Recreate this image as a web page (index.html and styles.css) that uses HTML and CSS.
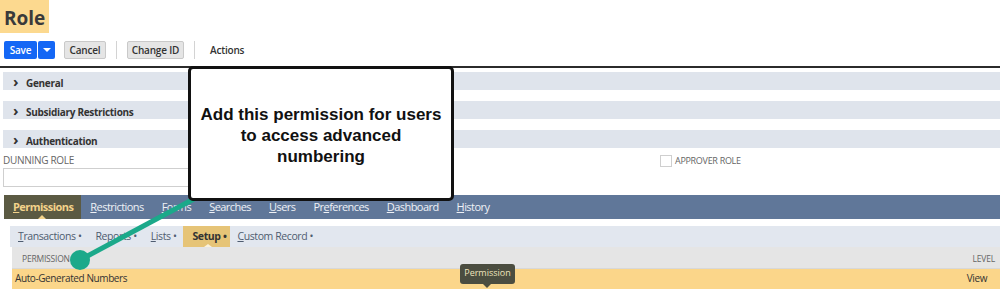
FILE: index.html
```html
<!DOCTYPE html>
<html lang="en">
<head>
  <meta charset="UTF-8" />
  <title>Role</title>
  <link rel="stylesheet" href="styles.css">
</head>
<body>

<div class="page">
  <div class="page-title">Role</div>

  <div class="toolbar">
    <div class="split-button">
      <button class="btn btn-primary">Save</button>
      <button class="btn btn-primary btn-caret"><span class="caret-down"></span></button>
    </div>
    <button class="btn btn-secondary btn-cancel">Cancel</button>
    <span class="toolbar-sep"></span>
    <button class="btn btn-secondary btn-change">Change ID</button>
    <span class="toolbar-sep"></span>
    <span class="toolbar-link">Actions</span>
  </div>

  <div class="page-rule"></div>

  <div class="section-bar"><span class="chevron">›</span>General</div>
  <div class="section-bar"><span class="chevron">›</span>Subsidiary Restrictions</div>
  <div class="section-bar"><span class="chevron">›</span>Authentication</div>

  <div class="field-row">
    <div class="field">
      <label class="field-label">Dunning Role</label>
      <input type="text" class="field-input">
    </div>
    <label class="check-field">
      <span class="check-box"></span>
      Approver Role
    </label>
  </div>

  <div class="tabs">
    <span class="tab active"><u>P</u>ermissions</span>
    <span class="tab"><u>R</u>estrictions</span>
    <span class="tab"><u>F</u>orms</span>
    <span class="tab"><u>S</u>earches</span>
    <span class="tab"><u>U</u>sers</span>
    <span class="tab">Pr<u>e</u>ferences</span>
    <span class="tab"><u>D</u>ashboard</span>
    <span class="tab"><u>H</u>istory</span>
  </div>

  <div class="subtabs">
    <span class="subtab"><u>T</u>ransactions •</span>
    <span class="subtab">Rep<u>o</u>rts •</span>
    <span class="subtab"><u>L</u>ists •</span>
    <span class="subtab active">Setup •</span>
    <span class="subtab"><u>C</u>ustom Record •</span>
  </div>

  <div class="grid-head">
    <span>Permission</span>
    <span>Level</span>
  </div>
  <div class="grid-row">
    <span>Auto-Generated Numbers</span>
    <span>View</span>
  </div>

  <svg class="pointer" width="1000" height="289" viewBox="0 0 1000 289">
    <line x1="80" y1="260" x2="205" y2="193" stroke="#1ba98a" stroke-width="5" />
    <circle cx="80" cy="260" r="10" fill="#1ba98a" />
  </svg>

  <div class="callout">Add this permission for users to access advanced numbering</div>

  <div class="tooltip">Permission</div>
</div>

</body>
</html>
```

FILE: styles.css
```css
* {
  margin: 0; padding: 0; box-sizing: border-box;
}

body {
  font-family: 'Open Sans', 'Noto Sans', sans-serif;
  color: #333;
  background: white;
}

.page {
  position: relative;
  width: 1000px;
  height: 289px;
  overflow: hidden;
}

.page-title {
  width: fit-content;
  background: #fcd98f;
  height: 33px;
  padding: 0 4px;
  font-size: 19px;
  font-weight: bold;
  line-height: 36px;
  color: #3a3a3a;
}

.toolbar {
  display: flex;
  align-items: center;
  height: 18px;
  margin-top: 8px;
  padding-left: 4px;
}

.split-button {
  display: flex;
}

.btn {
  font-family: inherit;
  font-size: 10px;
  font-weight: 600;
  letter-spacing: -0.2px;
  height: 18px;
  border-radius: 2px;
  cursor: pointer;
}

.btn-primary {
  background: #1467f5;
  color: white;
  border: none;
  width: 33px;
}

.btn-caret {
  width: 17px;
  margin-left: 1px;
  display: flex;
  align-items: center;
  justify-content: center;
}

.caret-down {
  width: 0;
  height: 0;
  border-left: 4px solid transparent;
  border-right: 4px solid transparent;
  border-top: 4px solid white;
}

.btn-secondary {
  background: #e5e5e5;
  border: 1px solid #c9c9c9;
  color: #333;
}

.btn-cancel {
  width: 42px;
  margin-left: 9px;
}

.btn-change {
  width: 57px;
}

.toolbar-sep {
  width: 1px;
  height: 18px;
  background: #d3d3d3;
  margin: 0 10px;
}

.toolbar-link {
  font-size: 10px;
  font-weight: 600;
  letter-spacing: -0.2px;
  margin-left: 5px;
}

.page-rule {
  height: 2px;
  background: #2b2b2b;
  margin-top: 7px;
}

.section-bar {
  margin: 4px 0 11px 3px;
  height: 18px;
  background: #dfe4ec;
  font-size: 10px;
  font-weight: bold;
  letter-spacing: -0.3px;
  line-height: 18px;
  color: #333;
}

.section-bar + .section-bar {
  margin-top: 0;
}

.chevron {
  display: inline-block;
  width: 23px;
  padding-left: 10px;
  font-size: 15px;
  font-weight: bold;
}

.field-row {
  display: flex;
  margin-top: -6px;
  padding-left: 3px;
}

.field {
  display: flex;
  flex-direction: column;
}

.field-label {
  font-size: 10px;
  text-transform: uppercase;
  color: #666;
  line-height: 15px;
  letter-spacing: -0.3px;
}

.field-input {
  width: 300px;
  height: 19px;
  border: 1px solid #cfcfcf;
}

.check-field {
  display: flex;
  align-items: center;
  gap: 3px;
  height: 13px;
  margin: 1px 0 0 357px;
  font-size: 9px;
  letter-spacing: -0.3px;
  text-transform: uppercase;
  color: #666;
}

.check-box {
  width: 12px;
  height: 12px;
  border: 1px solid #cfcfcf;
}

.tabs {
  display: flex;
  height: 24px;
  margin: 8px 0 0 4px;
  background: #607799;
  font-size: 11px;
  letter-spacing: -0.55px;
  line-height: 24px;
}

.tab {
  padding: 0 9px;
  color: #eef1f6;
}

.tab.active {
  position: relative;
  padding: 0 8px 0 9px;
  background: #5b5a43;
  color: #f3d38b;
  font-weight: bold;
}

.tab.active::after {
  content: '';
  position: absolute;
  left: 34px;
  bottom: 0;
  border-left: 4px solid transparent;
  border-right: 4px solid transparent;
  border-bottom: 4px solid #f3d38b;
}

.subtabs {
  display: flex;
  align-items: center;
  height: 21px;
  margin: 7px 0 0 10px;
  background: #e2e7ef;
  font-size: 10.5px;
  letter-spacing: -0.4px;
}

.subtab {
  height: 21px;
  line-height: 21px;
  padding: 0 7px;
  color: #4e5c70;
}

.subtab:first-child {
  padding-left: 8px;
}

.subtab.active {
  position: relative;
  padding: 0 4px 0 9px;
  background: #e6c477;
  color: #333;
  font-weight: bold;
}

.subtab.active::after {
  content: '';
  position: absolute;
  left: 21px;
  bottom: 0;
  border-left: 4px solid transparent;
  border-right: 4px solid transparent;
  border-bottom: 3px solid #fbf2dc;
}

.grid-head,
.grid-row {
  display: flex;
  justify-content: space-between;
  margin-left: 12px;
}

.grid-head {
  height: 22px;
  padding: 6px 5px 0 10px;
  background: #e5e5e5;
  font-size: 8.5px;
  letter-spacing: -0.2px;
  text-transform: uppercase;
  color: #666;
  border-bottom: 1px solid #d8d8d8;
}

.grid-row {
  height: 20px;
  padding: 0 13px 0 3px;
  background: #fbd68a;
  font-size: 10px;
  letter-spacing: -0.4px;
  line-height: 18px;
  color: #333;
}

.pointer {
  position: absolute;
  top: 0;
  left: 0;
}

.callout {
  position: absolute;
  left: 188px;
  top: 66px;
  width: 266px;
  height: 135px;
  padding: 35px 4px 0;
  background: white;
  border: 3px solid #111;
  border-radius: 5px;
  font-family: 'Liberation Sans', Arial, sans-serif;
  font-size: 17px;
  font-weight: bold;
  line-height: 21px;
  text-align: center;
  color: #111;
}

.tooltip {
  position: absolute;
  left: 460px;
  top: 264px;
  width: 55px;
  height: 20px;
  background: #4b4d40;
  border-radius: 3px;
  font-size: 9px;
  line-height: 18px;
  text-align: center;
  color: #efe4bd;
}

.tooltip::after {
  content: '';
  position: absolute;
  left: 23px;
  bottom: -4px;
  border-left: 4px solid transparent;
  border-right: 4px solid transparent;
  border-top: 4px solid #4b4d40;
}
```
